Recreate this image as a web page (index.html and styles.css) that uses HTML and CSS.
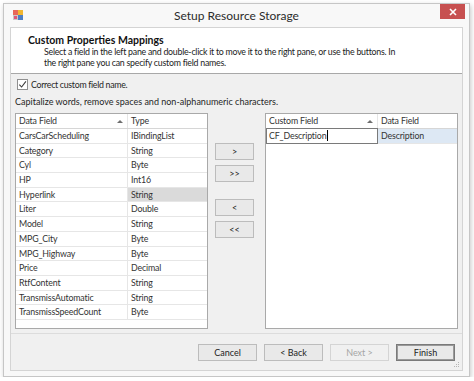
FILE: index.html
```html
<!DOCTYPE html>
<html>
<head>
<meta charset="utf-8">
<link rel="stylesheet" href="styles.css">
</head>
<body>
<div class="window">
  <div class="titlebar">
    <div class="tb-left">
      <svg class="app-icon" width="10" height="10" viewBox="0 0 10 10">
        <rect x="0" y="0" width="5" height="5" fill="#e8685a"/>
        <rect x="5" y="0" width="5" height="5" fill="#f2b630"/>
        <rect x="0" y="5" width="5" height="5" fill="#c9c9c9"/>
        <rect x="5" y="5" width="5" height="5" fill="#4f7fc4"/>
        <rect x="1" y="6" width="3" height="3" fill="#e0577a"/>
      </svg>
    </div>
    <div class="title">Setup Resource Storage</div>
    <div class="tb-right">
      <div class="close">
        <svg width="8" height="8" viewBox="0 0 8 8"><path d="M1 1L7 7M7 1L1 7" stroke="#fff" stroke-width="1.6"/></svg>
      </div>
    </div>
  </div>
  <div class="client">
    <div class="header">
      <h1>Custom Properties Mappings</h1>
      <p>Select a field in the left pane and double-click it to move it to the right pane, or use the buttons. In<br>the right pane you can specify custom field names.</p>
    </div>
    <div class="body">
      <label class="check">
        <span class="box"><svg width="9" height="9" viewBox="0 0 10 10"><path d="M1.5 5.2L4 7.8L8.8 1.5" fill="none" stroke="#3c3c3c" stroke-width="1.2"/></svg></span>
        <span>Correct custom field name.</span>
      </label>
      <div class="caption">Capitalize words, remove spaces and non-alphanumeric characters.</div>
      <div class="panes">
        <div class="grid left-grid">
          <div class="row head">
            <div class="cell c1">Data Field<span class="sort"></span></div>
            <div class="cell c2">Type</div>
          </div>
          <div class="row"><div class="cell c1">CarsCarScheduling</div><div class="cell c2">IBindingList</div></div>
          <div class="row"><div class="cell c1">Category</div><div class="cell c2">String</div></div>
          <div class="row"><div class="cell c1">Cyl</div><div class="cell c2">Byte</div></div>
          <div class="row"><div class="cell c1">HP</div><div class="cell c2">Int16</div></div>
          <div class="row"><div class="cell c1">Hyperlink</div><div class="cell c2 selected">String</div></div>
          <div class="row"><div class="cell c1">Liter</div><div class="cell c2">Double</div></div>
          <div class="row"><div class="cell c1">Model</div><div class="cell c2">String</div></div>
          <div class="row"><div class="cell c1">MPG_City</div><div class="cell c2">Byte</div></div>
          <div class="row"><div class="cell c1">MPG_Highway</div><div class="cell c2">Byte</div></div>
          <div class="row"><div class="cell c1">Price</div><div class="cell c2">Decimal</div></div>
          <div class="row"><div class="cell c1">RtfContent</div><div class="cell c2">String</div></div>
          <div class="row"><div class="cell c1">TransmissAutomatic</div><div class="cell c2">String</div></div>
          <div class="row"><div class="cell c1">TransmissSpeedCount</div><div class="cell c2">Byte</div></div>
        </div>
        <div class="movers">
          <button class="btn mv first">&gt;</button>
          <button class="btn mv">&gt;&gt;</button>
          <button class="btn mv gap">&lt;</button>
          <button class="btn mv">&lt;&lt;</button>
        </div>
        <div class="grid right-grid">
          <div class="row head">
            <div class="cell c1">Custom Field<span class="sort"></span></div>
            <div class="cell c2">Data Field</div>
          </div>
          <div class="row current">
            <div class="cell c1 editing">CF_Description<span class="caret"></span></div>
            <div class="cell c2 focused">Description</div>
          </div>
        </div>
      </div>
    </div>
    <div class="footer">
      <button class="btn wiz">Cancel</button>
      <button class="btn wiz">&lt; Back</button>
      <button class="btn wiz disabled">Next &gt;</button>
      <button class="btn wiz default">Finish</button>
    </div>
    <svg class="grip" width="6" height="6" viewBox="0 0 6 6">
      <rect x="4" y="0" width="1" height="1" fill="#b5b5b5"/>
      <rect x="2" y="2" width="1" height="1" fill="#b5b5b5"/>
      <rect x="4" y="2" width="1" height="1" fill="#b5b5b5"/>
      <rect x="0" y="4" width="1" height="1" fill="#b5b5b5"/>
      <rect x="2" y="4" width="1" height="1" fill="#b5b5b5"/>
      <rect x="4" y="4" width="1" height="1" fill="#b5b5b5"/>
    </svg>
  </div>
</div>
</body>
</html>
```
FILE: styles.css
```css
* { box-sizing: border-box; }
body {
  margin: 0;
  background: #fff;
  font-family: "Lato", "Open Sans", sans-serif;
  font-size: 9px;
  color: #262626;
}
.window {
  margin: 3px 0 0 3px;
  width: 467px;
  height: 374px;
  border: 1px solid #c6c6c6;
  background: #f8f8f8;
  box-shadow: 1px 2px 5px rgba(0, 0, 0, 0.22);
  display: flex;
  flex-direction: column;
}
.titlebar {
  height: 23px;
  display: grid;
  grid-template-columns: 1fr auto 1fr;
  align-items: start;
}
.tb-left { padding: 6px 0 0 9px; }
.app-icon { display: block; }
.title {
  font-size: 12px;
  color: #2b2b2b;
  line-height: 18px;
  padding-top: 3px;
}
.tb-right { display: flex; justify-content: flex-end; padding-right: 4px; }
.close {
  width: 25px;
  height: 15px;
  background: #c75050;
  display: flex;
  align-items: center;
  justify-content: center;
}
.client {
  position: relative;
  margin: 0 6px 5px 6px;
  flex: 1;
  border: 1px solid #d4d4d4;
  background: #f0f0f0;
  display: flex;
  flex-direction: column;
}
.header {
  background: #fff;
  height: 46px;
  border-bottom: 1px solid #a8a8a8;
  padding: 6px 0 0 17px;
}
.header h1 {
  margin: 0;
  font-size: 10.5px;
  font-weight: 700;
  line-height: 12px;
  color: #111;
}
.header p {
  margin: 0 0 0 16px;
  font-size: 8.8px;
  letter-spacing: -0.25px;
  line-height: 11px;
  color: #222;
  white-space: nowrap;
}
.body { padding: 4px 0 0 4px; }
.check {
  display: flex;
  align-items: center;
  height: 13px;
  margin-left: 2px;
  gap: 3px;
  font-size: 8.8px;
  letter-spacing: -0.3px;
}
.box {
  width: 11px;
  height: 11px;
  border: 1px solid #909090;
  background: #fff;
  display: flex;
  align-items: center;
  justify-content: center;
}
.caption { margin-top: 5px; line-height: 12px; }
.panes {
  margin-top: 5px;
  display: flex;
  height: 216px;
}
.grid {
  border: 1px solid #a9a9a9;
  background: #fff;
  color: #333;
  font-size: 8.8px;
  letter-spacing: -0.15px;
}
.left-grid { width: 193px; }
.right-grid { width: 193px; margin-left: 11px; }
.row {
  display: flex;
  height: 14.7px;
  border-bottom: 1px solid #e6e6e6;
}
.row.head { height: 15px; border-bottom: 1px solid #d6d6d6; }
.cell {
  line-height: 13.7px;
  padding-left: 3px;
  white-space: nowrap;
  overflow: hidden;
}
.c1 {
  width: 112px;
  border-right: 1px solid #e6e6e6;
  display: flex;
  align-items: center;
}
.c2 { flex: 1; }
.sort {
  margin-left: auto;
  margin-right: 4px;
  width: 0;
  height: 0;
  border-left: 3px solid transparent;
  border-right: 3px solid transparent;
  border-bottom: 3px solid #6e6e6e;
}
.selected { background: #dadada; }
.editing {
  border: 1px solid #7a7a7a;
  margin: -1px 0 -1px 0;
  height: 15.7px;
  background: #fff;
  padding-left: 2px;
}
.caret {
  width: 1px;
  height: 11px;
  background: #000;
  margin-left: 1px;
}
.focused { background: #dde8f4; }
.movers {
  display: flex;
  flex-direction: column;
  margin-left: 7px;
  width: 39px;
}
.btn {
  font-family: inherit;
  font-size: 9px;
  color: #222;
  background: #e9e9e9;
  border: 1px solid #bcbcbc;
  padding: 0;
  line-height: 15px;
  height: 17px;
}
.mv { margin-top: 5px; }
.mv.first { margin-top: 30px; }
.mv.gap { margin-top: 17px; }
.footer {
  margin-top: 4px;
  border-top: 1px solid #dcdcdc;
  display: flex;
  justify-content: flex-end;
  gap: 7px;
  padding: 10px 7px 0 0;
}
.wiz { width: 59px; }
.disabled { color: #a5a5a5; background: #f0f0f0; border-color: #d4d4d4; }
.default { border: 1px solid #7a7a7a; box-shadow: inset 0 0 0 1px #9a9a9a; }
.grip { position: absolute; right: 2px; bottom: 2px; }
```
